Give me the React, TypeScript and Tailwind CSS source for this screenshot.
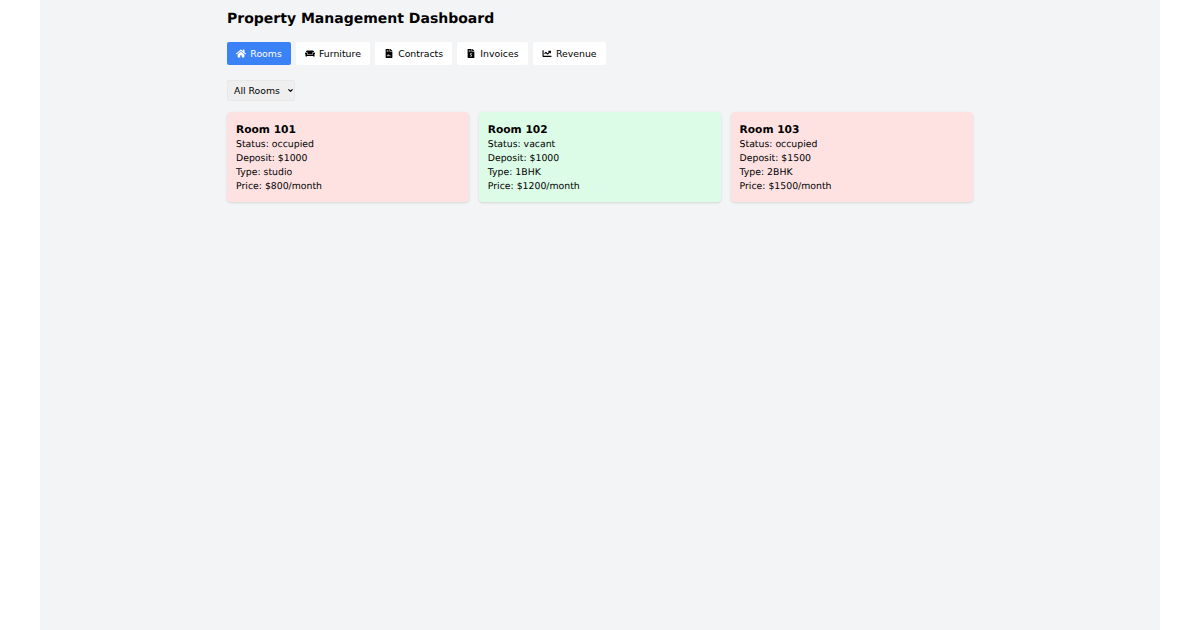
import { FaHome, FaCouch, FaFileContract, FaFileInvoiceDollar, FaChartLine } from 'react-icons/fa'
import { ChevronDown } from 'lucide-react'

const tabs = [
  { label: 'Rooms', icon: FaHome, active: true, width: 'w-[64px]' },
  { label: 'Furniture', icon: FaCouch, active: false, width: 'w-[74.5px]' },
  { label: 'Contracts', icon: FaFileContract, active: false, width: 'w-[77.5px]' },
  { label: 'Invoices', icon: FaFileInvoiceDollar, active: false, width: 'w-[71px]' },
  { label: 'Revenue', icon: FaChartLine, active: false, width: 'w-[73.5px]' },
]

const rooms = [
  { name: 'Room 101', status: 'occupied', deposit: '$1000', type: 'studio', price: '$800/month' },
  { name: 'Room 102', status: 'vacant', deposit: '$1000', type: '1BHK', price: '$1200/month' },
  { name: 'Room 103', status: 'occupied', deposit: '$1500', type: '2BHK', price: '$1500/month' },
]

export default function App() {
  return (
    <div className="bg-white h-[630px] overflow-hidden px-[40px] font-['DejaVu_Sans',sans-serif] [text-rendering:geometricPrecision]">
      <div className="bg-[#f3f4f6] h-full">
        <div className="w-[746px] mx-auto pt-[10px]">
          <h1 className="text-[14px] leading-[18px] font-bold text-black">Property Management Dashboard</h1>

          {/* Tabs */}
          <div className="flex gap-[4.67px] mt-[14px]">
            {tabs.map((tab) => {
              const Icon = tab.icon
              return (
                <button
                  key={tab.label}
                  className={`${tab.width} h-[23px] flex items-center gap-[4px] pl-[9.33px] rounded-[2px] text-[9.33px] ${
                    tab.active ? 'bg-[#3b82f6] text-white' : 'bg-white text-black'
                  }`}
                >
                  <Icon className="w-[10px] h-[9px]" />
                  <span>{tab.label}</span>
                </button>
              )
            })}
          </div>

          <div className="relative mt-[15px] w-[68px] h-[21px]">
            <select className="block w-full h-full appearance-none pl-[6px] text-[9.33px] text-black bg-[#efefef] border border-[#e8e8e8] rounded-[2px]">
              <option>All Rooms</option>
            </select>
            <ChevronDown className="absolute right-[1px] top-[7px] w-[7px] h-[7px] text-black pointer-events-none" strokeWidth={4} />
          </div>

          {/* Room cards */}
          <div className="grid grid-cols-3 gap-[9.33px] mt-[11px]">
            {rooms.map((room) => (
              <div
                key={room.name}
                className={`h-[90px] pt-[10px] px-[9px] rounded-[4px] shadow-sm text-[9.33px] leading-[14px] text-black ${
                  room.status === 'vacant' ? 'bg-[#dcfce7]' : 'bg-[#fee2e2]'
                }`}
              >
                <h2 className="text-[10.67px] leading-[16px] font-bold">{room.name}</h2>
                <p>Status: {room.status}</p>
                <p>Deposit: {room.deposit}</p>
                <p>Type: {room.type}</p>
                <p>Price: {room.price}</p>
              </div>
            ))}
          </div>
        </div>
      </div>
    </div>
  )
}
